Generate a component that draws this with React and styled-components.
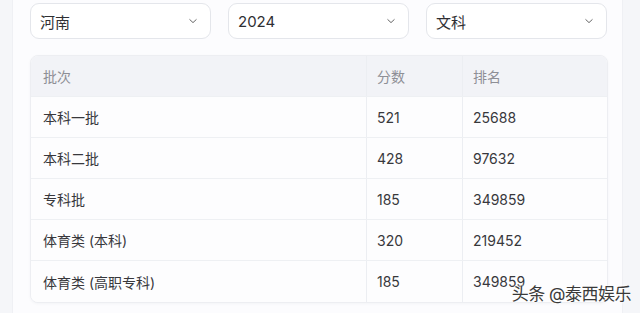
import React from "react";
import styled, { createGlobalStyle } from "styled-components";

const rows = [
  { batch: "本科一批", score: "521", rank: "25688" },
  { batch: "本科二批", score: "428", rank: "97632" },
  { batch: "专科批", score: "185", rank: "349859" },
  { batch: "体育类 (本科)", score: "320", rank: "219452" },
  { batch: "体育类 (高职专科)", score: "185", rank: "349859" },
];

const selects = ["河南", "2024", "文科"];

const Chevron = () => (
  <svg width="12" height="12" viewBox="0 0 12 12" fill="none">
    <path d="M2.8 4.6 L6 7.6 L9.2 4.6" stroke="#666" strokeWidth="1" strokeLinecap="round" strokeLinejoin="round" />
  </svg>
);

const App = () => {
  return (
    <Page>
      <GlobalStyle />
      <Panel>
        <Filters>
          {selects.map((s) => (
            <Select key={s}>
              <span>{s}</span>
              <Chevron />
            </Select>
          ))}
        </Filters>
        <Table>
          <Row $head>
            <Cell $first>批次</Cell>
            <Cell>分数</Cell>
            <Cell>排名</Cell>
          </Row>
          {rows.map((r, i) => (
            <Row key={i} $last={i === rows.length - 1}>
              <Cell $first>{r.batch}</Cell>
              <Cell>{r.score}</Cell>
              <Cell>{r.rank}</Cell>
            </Row>
          ))}
        </Table>
      </Panel>
      <Watermark>头条 @泰西娱乐</Watermark>
    </Page>
  );
};

export default App;

const GlobalStyle = createGlobalStyle`
  body {
    margin: 0;
    background: #f5f6f9;
    font-family: Inter, "Noto Sans CJK SC", sans-serif;
    color: #333;
  }
`;

const Page = styled.div`
  position: relative;
  width: 640px;
  height: 313px;
  padding-left: 12px;
  box-sizing: border-box;
  overflow: hidden;
`;

const Panel = styled.div`
  width: 611px;
  height: 313px;
  box-sizing: border-box;
  background: #fcfcfe;
  border-left: 1px solid #eff0f4;
  border-right: 1px solid #eff0f4;
  padding: 3px 16px 0 17px;
`;

const Filters = styled.div`
  display: grid;
  grid-template-columns: repeat(3, 181px);
  column-gap: 17px;
`;

const Select = styled.div`
  height: 36px;
  box-sizing: border-box;
  border: 1px solid #e4e6eb;
  border-radius: 9px;
  background: #fff;
  display: flex;
  align-items: center;
  justify-content: space-between;
  padding: 0 11px 0 9px;
  font-size: 15px;
  color: #2f2f33;
`;

const Table = styled.div`
  margin-top: 16px;
  width: 576px;
  border: 1px solid #edeef2;
  border-radius: 8px;
  overflow: hidden;
  background: #fdfdfe;
  box-shadow: 0 1px 3px rgba(30, 40, 80, 0.04);
`;

const Row = styled.div`
  display: grid;
  grid-template-columns: 335px 96px 1fr;
  height: 41px;
  box-sizing: border-box;
  background: ${(p) => (p.$head ? "#f2f3f7" : "#fdfdfe")};
  color: ${(p) => (p.$head ? "#8e8f96" : "#38383c")};
  border-bottom: ${(p) => (p.$last ? "none" : "1px solid #eef0f3")};
`;

const Cell = styled.div`
  display: flex;
  align-items: center;
  font-size: 14px;
  padding-left: ${(p) => (p.$first ? "12px" : "10px")};
  border-left: ${(p) => (p.$first ? "none" : "1px solid #eceef2")};
`;

const Watermark = styled.div`
  position: absolute;
  right: 9px;
  bottom: 8px;
  font-size: 17px;
  color: #3a3a3a;
  text-shadow: 0 0 2px #fff, 0 0 2px #fff, 0 0 3px #fff;
  letter-spacing: -0.5px;
`;
